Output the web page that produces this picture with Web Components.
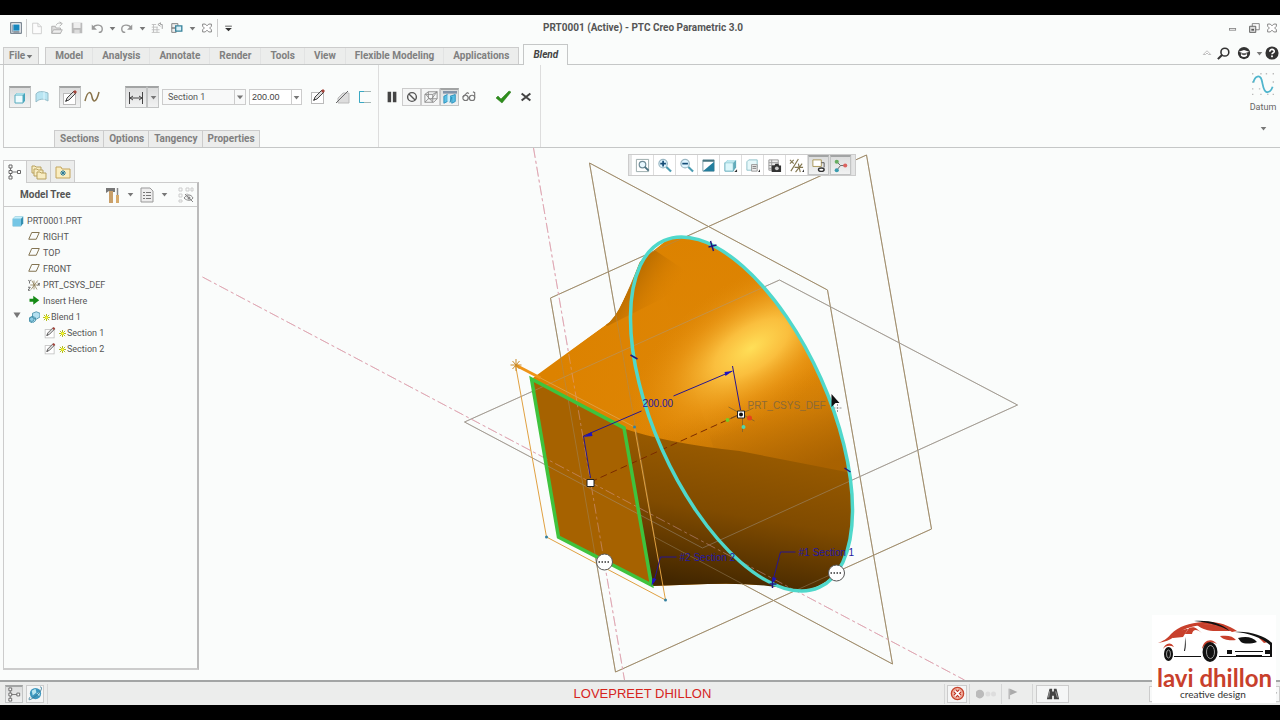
<!DOCTYPE html>
<html lang="en">
<head>
<meta charset="utf-8">
<title>PRT0001 (Active) - PTC Creo Parametric 3.0</title>
<style>
html, body { margin: 0; background: #000; }
body { font-family: Roboto, "Liberation Sans", sans-serif; font-size: 10px; color: #666; }
</style>
</head>
<body>
<creo-app></creo-app>
<script>
const ICONS = {
  app: '<rect x="2" y="2" width="12" height="12" fill="#fff" stroke="#456"/><rect x="3" y="4" width="2" height="9" fill="#9ab"/><rect x="5" y="4" width="7" height="7" fill="#1586bd"/><path d="M5 12.500h7" stroke="#234"/>',
  new: '<path d="M3 2.500h6l4 4v8H3zM9 2.500v4h4" fill="#fcfcfc" stroke="#ccc"/>',
  open: '<path d="M2 14V6h4l1 2h5v6z" fill="#ddd" stroke="#aaa"/><path d="M4 10h10l-2 4H2z" fill="#eee" stroke="#aaa"/><path d="M7 5c1-3 4-3 6-2M11 1l3 2-3 3" fill="none" stroke="#aaa"/>',
  save: '<path d="M2 2h12v12H2z" fill="#bbb"/><path d="M4 2h8v6H4z" fill="#eee"/><path d="M5 10h6v4H5z" fill="#ddd"/>',
  undo: '<path d="M3 8c3-5 11-4 11 1 0 3-2 4-4 4" fill="none" stroke="#999" stroke-width="1.600"/><path d="M2 4v6h6z" fill="#999"/>',
  redo: '<path d="M13 8C10 3 2 4 2 9c0 3 2 4 4 4" fill="none" stroke="#999" stroke-width="1.600"/><path d="M14 4v6H8z" fill="#999"/>',
  regen: '<path d="M2 4h5M2 7h7M2 10h9M2 13h9M4 4v9M8 7v6" stroke="#bbb"/><path d="M9 4l3-2v2h2v5M9 4l3 2" fill="none" stroke="#999"/>',
  windows: '<path d="M2 3h7v5H2zM2 8h5v5H2z" fill="#eee" stroke="#777"/><path d="M6.500 5.500h7v6h-7z" fill="#d9f0f8" stroke="#38839c" stroke-width="1.500"/>',
  closewin: '<path d="M3 3.500h3l2 2 2-2h3V6l-2 2 2 2v2.500h-3l-2-2-2 2H3V10l2-2-2-2z" fill="#fff" stroke="#777"/>',
  down: '<path d="M3 5.500h10L8 11.500z" fill="#777"/>',
  menu: '<path d="M2 3h12v1.500H2zM2 7h12l-6 6z" fill="#333"/>',
  min: '<rect x="4" y="8.500" width="7" height="2" fill="#fff" stroke="#888"/>',
  restore: '<path d="M6 3h8v7H6z" fill="#fff" stroke="#777"/><path d="M3 6h7v7H3z" fill="#ddd" stroke="#555"/><path d="M5 9h3v2H5z" fill="#555"/>',
  collapse: '<path d="M3 10l5-5 5 5h-3L8 8l-2 2z" fill="#fff" stroke="#aaa"/>',
  search: '<circle cx="9" cy="7" r="4.500" fill="none" stroke="#333" stroke-width="1.800"/><path d="M6 10l-5 5" stroke="#333" stroke-width="2.400"/>',
  learn: '<circle cx="8" cy="8" r="7" fill="#333"/><path d="M2 6.500l6-2 6 2-6 2z" fill="#fff"/><path d="M4.500 8v3c2 2 5 2 7 0V8L8 9.500z" fill="#fff"/><path d="M5 9l3 1 3-1" fill="none" stroke="#333"/>',
  help: '<circle cx="8" cy="8" r="7.500" fill="#333"/><path d="M5.500 6.500c0-4 5.500-3 5 0-.3 1.400-2.500 1.500-2.500 3" fill="none" stroke="#fff" stroke-width="1.900"/><rect x="7" y="10.800" width="2" height="2" fill="#fff"/>',
  solid: '<path d="M3 5l2-2h8v8l-2 2H3z" fill="#45a5bd"/><path d="M3 5h8v8H3z" fill="#eefcff" stroke="#57aabd"/><path d="M3 5l2-2h8l-2 2z" fill="#a3dce7"/>',
  surface: '<path d="M2 13V5c2-3 6-3 12-1v8c-5-3-9-2-12 1z" fill="#b8e5f2" stroke="#96bdc9"/><path d="M10 3v8" stroke="#dff7ff"/>',
  sketch: '<rect x="1.500" y="3.500" width="12" height="11" fill="#fff" stroke="#bbb"/><path d="M4 11l1-3 7-7 2 2-7 7z" fill="#ddd" stroke="#444"/><path d="M11 2l2-2 2 2-2 2z" fill="#a5443b"/><path d="M3 12l2-1-1-1z" fill="#111"/>',
  curve: '<path d="M1 12C4 0 7 3 8 8s4 7 7-5" fill="none" stroke="#88734a" stroke-width="1.500"/>',
  dim: '<path d="M1.500 2v12M14.500 2v12M2 8h12M5 6L2 8l3 2M11 6l3 2-3 2" fill="none" stroke="#444"/>',
  blendcut: '<path d="M3 14V9l5-5h6v10z" fill="#ddd" stroke="#bbb"/><path d="M1 14L13 2" stroke="#666"/>',
  openend: '<path d="M14 2.500H2.500v11H14" fill="none" stroke="#a7b7b5"/><path d="M7 2.500H2.500v11H7" fill="none" stroke="#39a9c4"/>',
  pause: '<path d="M3 2h4v12H3zM9 2h4v12H9z" fill="#444"/>',
  none: '<circle cx="8" cy="8" r="5" fill="none" stroke="#555" stroke-width="1.600"/><path d="M4.500 4.500l7 7" stroke="#555" stroke-width="1.600"/>',
  wire: '<path d="M1 5l4-3h10v8l-4 4H1zM1 5h9v9M10 5l5-3M5 2v8h10M1 14l4-4M2 5l8 9M15 2l-7 9" fill="none" stroke="#888"/>',
  attach: '<path d="M0 0h16v3H0z" fill="#8193a8"/><path d="M1 6l4-2v8l-4 2zM8 6l6-2v8l-4 2V7l-2 6z" fill="#5abfe4" stroke="#258db8"/><path d="M5 4l3 2v6l-3 0z" fill="#c8eefb"/>',
  glasses: '<circle cx="4" cy="9" r="3" fill="none" stroke="#777" stroke-width="1.300"/><circle cx="11.500" cy="9" r="3" fill="none" stroke="#777" stroke-width="1.300"/><path d="M1 8l5-5 2 1M7 9h2M14.500 9V3l-2-1" fill="none" stroke="#777" stroke-width="1.300"/>',
  ok: '<path d="M1 9l2-2 3 3 8-8 2 1-9 11z" fill="#2d8f1b" stroke="#28741b" stroke-width=".5"/>',
  cancel: '<path d="M3 4l10 8M13 4L3 12" stroke="#444" stroke-width="2.300"/>',
  datum: '<g fill="#bbb"><path d="M0 0h1v1H0zM6 0h1v1H6zM10 0h1v1h-1zM15 0h1v1h-1zM0 6h1v1H0zM15 6h1v1h-1zM0 11h1v1H0zM5 11h1v1H5zM0 15h1v1H0zM6 15h1v1H6zM11 15h1v1h-1zM15 15h1v1h-1z"/></g><path d="M1 7c1-5 5-6 6-2 1 3 1 9 4 9 2 0 3-1 4-4" fill="none" stroke="#4fb5cd" stroke-width="1.300"/>',
  tree: '<path d="M3.500 3v10M4 8h9" stroke="#777"/><path d="M2 1h3v3H2zM2 6.500h3v3H2zM2 12h3v3H2zM10.500 6.500h3v3h-3z" fill="#fff" stroke="#666"/>',
  folders: '<g fill="#f8edc3" stroke="#b8a15e"><path d="M1 2h3l1 1h5v6H1z"/><path d="M3 5h3l1 1h5v6H3z"/><path d="M6 8h3l1 1h5v6H6z"/></g>',
  favorite: '<path d="M1 3h5l1 2h8v9H1z" fill="#faedbf" stroke="#c4a55c"/><path d="M8 6v6M5 9h6M6 7l4 4M10 7l-4 4" stroke="#287b9b"/>',
  tools: '<path d="M4 4h4v12H4z" fill="#c9a06a"/><path d="M1 1h9v4H8V4H4L1 6z" fill="#777"/><path d="M12.500 1v7" stroke="#888" stroke-width="1.500"/><path d="M11 8h3v8h-3z" fill="#d6aa6b"/>',
  list: '<path d="M2 1h9l3 3v11H2z" fill="#eee" stroke="#999"/><path d="M4 5h2v1H4zM4 8h2v1H4zM4 11h2v1H4zM7 5h5v1H7zM7 8h5v1H7zM7 11h5v1H7z" fill="#777"/>',
  treehide: '<path d="M1 1h3v3H1zM1 7h3v3H1zM1 13h3v2H1zM8 1h3v3H8zM8 7h2v3H8zM13 1h2v3h-2z" fill="none" stroke="#ccc"/><path d="M6 11c3-4 7-4 9 0-2 3-6 3-9 0zM7 7l8 8" fill="none" stroke="#888"/><circle cx="11" cy="11" r="1.500" fill="#888"/>',
  part: '<path d="M1 5l3-3h11v9l-3 4H1z" fill="#348fb0"/><path d="M1 5h11v10H1z" fill="#75c6e5"/><path d="M1 5l3-3h11l-3 3z" fill="#c5effb"/>',
  plane: '<path d="M1 11L5 2h10l-4 9z" fill="none" stroke="#80704d" stroke-width="1.300"/>',
  csys: '<path d="M3 8h11M8 2v12M4 14l9-12M5 2l7 12" stroke="#8a7a50"/><path d="M0 1l2 2 2-2M2 3v3M0 11h3l-3 4h3M13 5l3 4M16 5l-3 4" fill="none" stroke="#444"/>',
  insert: '<path d="M2 5h5V1l8 6-8 6V9H2z" fill="#168b16"/>',
  blend: '<path d="M6 3l5-2 5 2v5l-5 3-5-2zM2 9l4-2 4 2v4l-4 3-4-2z" fill="#b4e0f0" stroke="#35849f"/><circle cx="5" cy="11" r="3" fill="#8bcae2" stroke="#35849f"/>',
  star: '<path d="M8 0v16M0 8h16M2 2l12 12M14 2L2 14" stroke="#a9b300" stroke-width="2"/><circle cx="8" cy="8" r="3" fill="#ff3"/>',
  refit: '<path d="M1.500 1.500h13v13h-13z" fill="#fff" stroke="#9aa"/><circle cx="8" cy="7" r="3.500" fill="#e8f8ff" stroke="#6f8c98" stroke-width="1.300"/><path d="M10.500 9.500l4 4" stroke="#497181" stroke-width="2"/>',
  zoomin: '<circle cx="6.500" cy="6" r="4.500" fill="#dff5ff" stroke="#9bb8c4" stroke-width="1.300"/><path d="M10 9.500l5 5" stroke="#4a9bb1" stroke-width="2.200"/><path d="M6.500 3v6M3.500 6h6" stroke="#164d77" stroke-width="1.800"/>',
  zoomout: '<circle cx="6.500" cy="6" r="4.500" fill="#dff5ff" stroke="#9bb8c4" stroke-width="1.300"/><path d="M10 9.500l5 5" stroke="#4a9bb1" stroke-width="2.200"/><path d="M3.500 6h6" stroke="#164d77" stroke-width="1.800"/>',
  repaint: '<path d="M2 2h12v12H2z" fill="#fff" stroke="#7f9fa8"/><path d="M2 14L14 4v10z" fill="#247e9d"/><path d="M2 2h12v2H2z" fill="#477580"/>',
  shade: '<path d="M2 5l3-3h9v8l-3 4H2z" fill="#62acbb"/><path d="M2 5h9v9H2z" fill="#dcf7fb" stroke="#68aebd"/><path d="M2 5l3-3h9l-3 3z" fill="#bfe8ef"/><path d="M15 15h-3l3-3z" fill="#333"/>',
  views: '<path d="M2 4l2-2h9v8l-2 3H2z" fill="#e6f8fa" stroke="#8ec1ca"/><path d="M7 7h6v7H7z" fill="#eee" stroke="#999"/><path d="M8 9h4M8 11h4" stroke="#777"/><path d="M16 15h-2l2-3z" fill="#333"/>',
  camera: '<path d="M2 2h10v11H2zM2 5h10M2 8h10M2 11h10M5 2v11" fill="#eee" stroke="#999"/><path d="M5 8h3l1-2h3l1 2h2v7H5z" fill="#333"/><circle cx="10.500" cy="11" r="2" fill="#ccc"/>',
  datums: '<path d="M1 2l4 4M5 2L1 6M10 1L2 14M6 10h9M10 6l2 9M14 6l-7 9" stroke="#82764e" stroke-width="1.200"/><path d="M16 15h-2l2-3z" fill="#333"/>',
  annot: '<path d="M2 2h9v7H2z" fill="#fff" stroke="#a89555"/><path d="M11 5h3v5" fill="none" stroke="#555"/><ellipse cx="11" cy="12.500" rx="3" ry="1.800" fill="#fff" stroke="#333" stroke-width="1.500"/>',
  spin: '<path d="M4 4l4 4h5M8 8l-4 5" fill="none" stroke="#666"/><circle cx="4" cy="4" r="2.200" fill="#67ad61"/><circle cx="13" cy="8" r="2.200" fill="#db625f"/><circle cx="4" cy="13" r="2.200" fill="#399cae"/>',
  browser: '<circle cx="8" cy="8" r="6" fill="#3c96bd"/><path d="M4 5l4-2 1 4-4 3zM9 8l4-2-1 5z" fill="#b7e5f0"/><path d="M2 12c-3 5 2 2 7-2s7-9 4-9" fill="none" stroke="#397a94"/>',
  stop: '<circle cx="8" cy="8" r="6.500" fill="#f4b9a8" stroke="#c7452f" stroke-width="1.500"/><path d="M5 5l6 6M11 5l-6 6" stroke="#b92c1e" stroke-width="4"/><path d="M5 5l6 6M11 5l-6 6" stroke="#fff" stroke-width="1.800"/>',
  flag: '<path d="M3 2h2v13H3z" fill="#bbb"/><path d="M5 2l9 4-9 4z" fill="#aaa"/>',
  find: '<path d="M4 2h3v3h2V2h3l3 12H9v-4H7v4H1z" fill="#444"/><path d="M4 5l-1 7M11 5l2 7" stroke="#aaa"/>',
  dots: '<circle cx="3" cy="8" r="3.500" fill="#bbb"/><circle cx="9.500" cy="8" r="2" fill="#ddd"/><circle cx="14" cy="8" r="2" fill="#ddd"/>',
  twisty: '<path d="M1 3h14L8 14z" fill="#777"/>'
};
const define = (name, css, html) => customElements.define(name, class extends HTMLElement {
  connectedCallback() {
    if (this.shadowRoot) return;
    const root = this.attachShadow({ mode: 'open' });
    root.innerHTML = `<style>:host,*{box-sizing:border-box}${css}</style>${typeof html === 'function' ? html(this) : html}`;
  }
});

define('c-icon', ':host{display:inline-block;width:var(--icon,16px);height:var(--icon,16px);flex:none}svg{display:block;width:100%;height:100%}',
  el => `<svg viewBox="0 0 16 16" aria-hidden="true">${ICONS[el.getAttribute('name')]}</svg>`);

define('tool-button', `:host{display:block;width:20px;height:22px;flex:none}
 button{display:flex;align-items:center;justify-content:center;width:100%;height:100%;padding:0;border:0;background:none}
 :host([pressed]) button{background:linear-gradient(#dcdddd,#f1f2f2);border:1px solid #c2c4c4;border-top:2px solid #a2a4a4}
 :host([raised]) button{background:#f5f6f6;border:1px solid #ccc}
 :host([narrow]){width:10px}`,
  el => `<button type="button" aria-label="${el.getAttribute('label')}"><c-icon name="${el.getAttribute('icon')}"></c-icon></button>`);

const btn = (icon, label, attrs = '') => `<tool-button icon="${icon}" label="${label}" ${attrs}></tool-button>`;
const arrow = label => btn('down', label, 'narrow style="--icon:9px"');

define('title-bar', `:host{display:grid;grid-template-columns:1fr auto 1fr;align-items:center;height:27px;padding:0 0 1px 6px}
 .q,.w{display:flex;align-items:center;--icon:14px}.w{justify-content:flex-end}.w tool-button{width:21px}.w tool-button:last-child{width:16px}
 i{width:1px;height:18px;background:#ccc}h1{margin:0;font-size:10px;line-height:14px;font-weight:700;color:#555}`,
 `<div class="q">${btn('app','Window menu')}<i></i>${btn('new','New')}${btn('open','Open')}${btn('save','Save')}${btn('undo','Undo')}${arrow('Undo list')}${btn('redo','Redo')}${arrow('Redo list')}${btn('regen','Regenerate')}${btn('windows','Windows')}${arrow('Window list')}${btn('closewin','Close')}<i></i>${btn('menu','Customize toolbar','style="--icon:9px"')}</div>
 <h1>PRT0001 (Active) - PTC Creo Parametric 3.0</h1>
 <div class="w">${btn('min','Minimize')}${btn('restore','Restore')}${btn('closewin','Close window')}</div>`);

define('ribbon-tabs', `:host{display:flex;align-items:flex-end;height:23px;padding-left:3px;border-bottom:1px solid #c5c7c7}
 button{font:700 10px/16px Roboto,"Liberation Sans",sans-serif;color:#808080;border:0;background:none;margin:0;padding:0 9px;white-space:nowrap}
 .file{display:flex;align-items:center;background:#ecedec;border:1px solid #ccc;border-bottom:0;padding:0 4px 0 5px;margin-right:6px}
 .file c-icon{--icon:9px}
 nav{display:flex;background:#ecedec;border:1px solid #ccc;border-bottom:0}nav button+button{border-left:1px solid #e2e3e3}
 .on{font-style:italic;color:#444;background:#fafcfb;border:1px solid #c5c7c7;border-bottom:0;height:21px;margin:0 0 -1px 4px;padding:2px 9px 2px;z-index:1}
 .r{margin-left:auto;display:flex;align-self:center;--icon:14px}.r tool-button{height:18px}.r tool-button:first-child{width:14px}.r tool-button:last-child{width:16px}`,
 `<button class="file">File<c-icon name="down"></c-icon></button><nav>${['Model','Analysis','Annotate','Render','Tools','View','Flexible Modeling','Applications'].map(t => `<button>${t}</button>`).join('')}</nav><button class="on">Blend</button>
 <div class="r">${btn('collapse','Minimize ribbon','style="--icon:12px"')}${btn('search','Search')}${btn('learn','Learning')}${arrow('Learning list')}${btn('help','Help')}</div>`);

define('drop-list', `:host{display:grid;height:16px;width:84px;border:1px solid #ccc;background:#f8f9f9}
 select{grid-area:1/1;appearance:none;border:0;background:none;width:100%;min-width:0;padding:0 16px 0 5px;font:9px/14px Roboto,sans-serif;color:#555}
 span{grid-area:1/1;justify-self:end;display:flex;align-items:center;border-left:1px solid #ccc;pointer-events:none;--icon:10px}`,
 el => `<select aria-label="${el.getAttribute('label')}"><option>${el.getAttribute('value') || ''}</option></select><span><c-icon name="down"></c-icon></span>`);

define('value-box', `:host{display:flex;height:16px;width:53px;border:1px solid #ccc;background:#fff}
 input{flex:1;min-width:0;border:0;padding:0 2px;font:9px/14px "Liberation Sans",sans-serif;color:#444;background:none}
 tool-button{height:14px;border-left:1px solid #ccc}`,
 `<input aria-label="Depth" value="200.00">${arrow('Recent depths')}`);

define('blend-dashboard', `:host{display:flex;height:83px;margin-left:3px;border-left:1px solid #ccc;border-bottom:1px solid #c5c7c7;flex:none}
 .a{display:flex;flex-direction:column;justify-content:space-between;width:375px;border-right:1px solid #ddd;padding-top:21px}
 .c{display:flex;align-items:center;padding-left:5px}.c tool-button{width:22px}.c tool-button[narrow]{width:12px}
 .g1{margin-left:6px}.g2{margin-left:22px}.g3{margin-left:3px}.g4{margin-left:3px}.g5{margin-left:5px}
 nav{display:flex;margin-left:50px}nav button{font:700 10px/16px Roboto,sans-serif;color:#808080;background:#ecedec;border:1px solid #ccc;border-bottom:0;border-right-width:0;padding:0 4px 0 5px;height:17px}nav button:last-child{border-right-width:1px}
 .b{display:flex;align-items:flex-start;width:162px;border-right:1px solid #ddd;padding:23px 0 0 3px;--icon:14px}.b tool-button{width:19px;height:18px}.b tool-button:first-child{width:20px}.b .ok{margin-left:15px;--icon:16px}.b .x{margin-left:4px}
 .datum{margin-left:auto;border:0;background:none;width:34px;padding:8px 0 0;display:flex;flex-direction:column;align-items:center;font:9px/14px Roboto,sans-serif;color:#666}
 .datum .i{--icon:22px;margin-bottom:5px}.datum .d{--icon:9px;margin-top:10px}`,
 `<div class="a"><div class="c">${btn('solid','Blend as solid','pressed')}${btn('surface','Blend as surface')}${btn('sketch','Sketched sections','pressed class="g1"')}${btn('curve','Selected sections')}${btn('dim','Offset dimension','pressed class="g2"')}<tool-button icon="down" label="Offset options" narrow pressed style="--icon:9px"></tool-button><drop-list class="g3" label="Section" value="Section 1"></drop-list><value-box class="g4"></value-box>${btn('sketch','Edit sketch','class="g5"')}${btn('blendcut','Remove material','class="g4"')}${btn('openend','Capped ends')}</div>
 <nav><button>Sections</button><button>Options</button><button>Tangency</button><button>Properties</button></nav></div>
 <div class="b">${btn('pause','Pause')}${btn('none','No preview','raised')}${btn('wire','Unattached','raised')}${btn('attach','Attached','pressed')}${btn('glasses','Verify')}${btn('ok','OK','class="ok"')}${btn('cancel','Cancel','class="x"')}</div>
 <button class="datum"><c-icon class="i" name="datum"></c-icon>Datum<c-icon class="d" name="down"></c-icon></button>`);

define('tree-row', `:host{display:flex;align-items:center;height:16px;font-size:9px;line-height:16px;color:#555;--icon:12px;padding-left:var(--indent)}
 .star{--icon:7px;margin-left:3px}.label{margin-left:3px}.star+.label{margin-left:1px}.tw{--icon:8px;margin:0 7px 4px -15px}`,
 el => `${el.hasAttribute('open') ? '<c-icon class="tw" name="twisty"></c-icon>' : ''}<c-icon name="${el.getAttribute('icon')}"></c-icon>${el.hasAttribute('fresh') ? '<c-icon class="star" name="star"></c-icon>' : ''}<span class="label"><slot></slot></span>`);

define('model-tree', `:host{display:flex;flex-direction:column;padding:12px 0 10px 3px}
 .tabs{display:flex;height:22px}.tabs tool-button{width:24px;height:22px;background:#ecedec;border:1px solid #ccc;border-bottom:0;border-left:0}.tabs tool-button:first-child{background:#fafcfb;border-left:1px solid #ccc;height:23px;margin-bottom:-1px;z-index:1}
 .panel{flex:1;border:1px solid #ccc;border-right:2px solid #bbb;border-bottom:2px solid #ccc}
 header{display:flex;align-items:center;height:24px;padding-left:16px;border-bottom:1px solid #ccc}
 h2{font-size:10px;line-height:14px;font-weight:700;color:#555;margin:0 auto 0 0}header tool-button[narrow]{margin:0 2px}header tool-button:last-child{margin:0 1px 0 5px}
 .rows{padding-top:6px}.l0{--indent:8px}.l1{--indent:24px}.l2{--indent:40px}`,
 `<div class="tabs">${btn('tree','Model tree')}${btn('folders','Folder browser')}${btn('favorite','Favorites')}</div>
 <div class="panel"><header><h2>Model Tree</h2>${btn('tools','Settings')}${arrow('Settings list')}${btn('list','Show')}${arrow('Show list')}${btn('treehide','Filter')}</header>
 <div class="rows"><tree-row class="l0" icon="part">PRT0001.PRT</tree-row><tree-row class="l1" icon="plane">RIGHT</tree-row><tree-row class="l1" icon="plane">TOP</tree-row><tree-row class="l1" icon="plane">FRONT</tree-row><tree-row class="l1" icon="csys">PRT_CSYS_DEF</tree-row><tree-row class="l1" icon="insert">Insert Here</tree-row><tree-row class="l1" icon="blend" fresh open>Blend 1</tree-row><tree-row class="l2" icon="sketch" fresh>Section 1</tree-row><tree-row class="l2" icon="sketch" fresh>Section 2</tree-row></div></div>`);

define('view-toolbar', `:host{display:flex;height:22px;padding:0 3px;background:#e4e5e5;border:1px solid #ccc;--icon:15px}
 tool-button{width:22px;height:20px;background:#fff;border-right:1px solid #ddd}`,
 btn('refit','Refit') + btn('zoomin','Zoom in') + btn('zoomout','Zoom out') + btn('repaint','Repaint') + btn('shade','Display style') + btn('views','Saved views') + btn('camera','View manager') + btn('datums','Datum display') + btn('annot','Annotation display','pressed') + btn('spin','Spin center','pressed'));

define('model-view', `:host{display:block;position:relative;min-width:0;min-height:0}svg{display:block;position:absolute;inset:0;width:100%;height:100%}
 view-toolbar{position:absolute;top:6px;left:39.700%}text{font:10px "Liberation Sans",sans-serif;fill:#2418a0}`,
 `<svg viewBox="200 148 1080 532" preserveAspectRatio="xMidYMid meet" role="img" aria-label="Blend preview">
 <defs>
 <linearGradient id="top" gradientUnits="userSpaceOnUse" x1="560" y1="350" x2="850" y2="430"><stop offset="0" stop-color="#dc8200"/><stop offset=".4" stop-color="#de8504"/><stop offset=".65" stop-color="#e28a09"/><stop offset="1" stop-color="#b96c00"/></linearGradient>
 <radialGradient id="glow" gradientUnits="userSpaceOnUse" cx="0" cy="0" r="1" gradientTransform="translate(752 348) rotate(-34) scale(140 68)"><stop offset="0" stop-color="#ffdf58"/><stop offset=".3" stop-color="#fdc544" stop-opacity=".9"/><stop offset=".65" stop-color="#efa01f" stop-opacity=".5"/><stop offset="1" stop-color="#e08a0a" stop-opacity="0"/></radialGradient>
 <linearGradient id="shadow" gradientUnits="userSpaceOnUse" x1="775" y1="380" x2="810" y2="470"><stop offset="0" stop-color="#a96200" stop-opacity="0"/><stop offset="1" stop-color="#a05c00" stop-opacity=".8"/></linearGradient>
 <linearGradient id="low" gradientUnits="userSpaceOnUse" x1="745" y1="440" x2="720" y2="588"><stop offset="0" stop-color="#9b5c00"/><stop offset=".5" stop-color="#804b00"/><stop offset="1" stop-color="#432700"/></linearGradient>
 <linearGradient id="neck" gradientUnits="userSpaceOnUse" x1="622" y1="285" x2="662" y2="310"><stop offset="0" stop-color="#b06800"/><stop offset=".4" stop-color="#c47300" stop-opacity=".7"/><stop offset="1" stop-color="#d87f00" stop-opacity="0"/></linearGradient>
 <clipPath id="body"><path d="M532 379L606 325Q615 320 624 300L640 262L671 237A190 87 65.900 0 1 852 520Q850 585 800 591Q760 582 708 584L652 586L559 538Z"/></clipPath>
 <g id="planes" fill="none"><path d="M590 163L828 290L893 664L655 537ZM551 298L867 155L932 529L616 672Z" stroke="#a08d6c"/><path d="M465 422L780 280L1018 405L703 548Z" stroke="#a49d94"/><path d="M203 277L965 680M534 148L625 680" stroke="#e0a8b4" stroke-dasharray="10 3 3 3"/></g>
 </defs>
 <use href="#planes"/>
 <g clip-path="url(#body)"><ellipse cx="742" cy="414" rx="190" ry="87" transform="rotate(65.900 742 414)" fill="url(#top)"/><path d="M530 379L606 325Q615 320 624 300L650 250L760 590L652 586Z" fill="url(#top)"/><path d="M606 325Q620 315 640 262L655 250L700 280L608 326Z" fill="url(#neck)"/><rect x="640" y="220" width="220" height="260" fill="url(#shadow)"/><rect x="600" y="220" width="260" height="270" fill="url(#glow)"/><path d="M620 427Q665 443 740 451L858 474V600H640Z" fill="url(#low)"/></g>
 <path d="M532 379L624 428L652 586L559 538Z" fill="#a66200"/>
 <use href="#planes" opacity=".45"/>
 <path d="M516 365L635 427L666 600L547 537Z" fill="none" stroke="#e0a040"/><path d="M516 365L541 378" stroke="#ee9417" stroke-width="3"/><path d="M511 365h11M516.500 359v12M513 361l7 8M520 361l-7 8" stroke="#c98b2b"/>
 <path d="M591 482L741 414" stroke="#7a2b00" stroke-dasharray="7 4"/>
 <path d="M532 379L624.500 428L652 585L559 537Z" fill="none" stroke="#3fc33d" stroke-width="3.500"/>
 <path d="M591 478L584 436L642 411M674 396L733 371M741 410L733 366M654 583L661 557H677M773 582L781 552H796" fill="none" stroke="#261590"/>
 <path d="M584 437l8-5 1 4zM733 371l-8 1 1 4zM652 586l1-8 4 1zM772 586l1-9 4 1z" fill="#1d12c0"/>
 <ellipse cx="742" cy="414" rx="190" ry="87" transform="rotate(65.900 742 414)" fill="none" stroke="#4fd8cb" stroke-width="3.500"/>
 <text x="643" y="407">200.00</text><text x="680" y="561">#2 Section 2</text><text x="748" y="409" style="fill:#8c6a38">PRT_CSYS_DEF</text><text x="799" y="556">#1 Section 1</text>
 <path d="M631 355l7 4M711 241l3 10M709 247l8-2M845 468l6 4M770 584h7M773 580v8" stroke="#211780" stroke-width="1.500"/>
 <path d="M729 407l26 14M728 420l26-12M743 418v14" stroke="#785c31" opacity=".7"/><circle cx="728" cy="420" r="2" fill="#77c927"/><circle cx="750" cy="418" r="2.500" fill="#e5441b"/><circle cx="744" cy="427" r="2" fill="#50d7af"/>
 <path d="M587.500 479.500h7v7h-7zM738 411h7v7h-7z" fill="#fff" stroke="#222"/><circle cx="741.500" cy="414.500" r="2" fill="#111"/>
 <g fill="#3481a0"><circle cx="547" cy="537" r="1.500"/><circle cx="666" cy="600" r="1.500"/><circle cx="635" cy="427" r="1.500"/></g>
 <g fill="#fff" stroke="#555"><circle cx="605" cy="562" r="8"/><circle cx="837" cy="573" r="8"/></g><path d="M599 562h12M831 573h12" stroke="#333" stroke-width="1.500" stroke-dasharray="1.500 1.500"/>
 <path d="M832 394l8 9-4 0-4 4z" fill="#111"/><path d="M838 404v9M834 408h9" stroke="#999" stroke-dasharray="2 1"/>
 </svg><view-toolbar></view-toolbar>`);

define('status-bar', `:host{display:grid;grid-template-columns:1fr auto 1fr;align-items:center;height:25px;flex:none;padding-left:5px;background:#ecedec;border-top:2px solid #a3a5a5}
 div{display:flex;align-items:center;--icon:15px}.l{gap:3px}.l tool-button{width:18px;height:18px}
 output{font:13px/16px "Liberation Sans",sans-serif;color:#d6241d}i{width:1px;height:20px;background:#d5d6d6}
 .r{justify-content:flex-end}.r tool-button{height:18px}.find{width:33px;margin:0 80px 0 3px;--icon:14px}.dots{width:25px;margin:0 3px;--icon:20px}.stop{margin:0 2px}.flag{margin-right:10px;--icon:13px}drop-list{width:131px}`,
 `<div class="l">${btn('tree','Toggle tree','pressed')}${btn('browser','Toggle browser','raised')}<i></i></div><output>LOVEPREET DHILLON</output>
 <div class="r"><i></i>${btn('stop','Stop','raised class="stop"')}<i></i>${btn('dots','Regeneration status','class="dots"')}<i></i>${btn('flag','Notifications','class="flag"')}<i></i>${btn('find','Find','raised class="find"')}<drop-list label="Selection filter"></drop-list></div>`);

define('brand-logo', `:host{display:block;width:124px;height:88px;background:#fff}svg{display:block;width:100%;height:100%}
 .n{font:700 24px Lato,sans-serif;fill:#c8402c}.s{font:10px Lato,sans-serif;fill:#333}`,
 `<svg viewBox="1152 615 124 88"><g fill="#c8402c"><path d="M1158 643c5-2 9-4 13-9 8-8 18-11 32-12 14-1 25 3 34 9l-5 1c-9-6-18-8-29-7-13 1-21 4-29 12-4 3-9 5-16 6z"/><path d="M1172 637c6-6 12-8 16-8l-5 8-10 1zM1185 634l4-6c3-1 6-1 8 1l5 4c-5-4-9-4-10 1zM1197 625c12-2 25 0 34 6h-15c-8 0-14-2-19-6zM1220 636c8-1 13 0 16 4-6 1-13 0-16-4zM1202 649c1-9 10-12 15-5-6-3-11-1-15 5zM1163 649c2-6 8-8 11-2-4-2-8-2-11 2zM1259 638c4 0 7 2 9 4l-4 1z"/></g>
 <g fill="#111"><ellipse cx="1168.500" cy="654" rx="4.500" ry="7"/><ellipse cx="1210" cy="652" rx="7.500" ry="10"/><path d="M1194 621c15-1 27 2 36 10-10-5-17-8-36-10zM1235 632c14-1 28 3 37 11v14h-53v-1h51v-11c-9-8-22-12-35-13zM1238 638c8-2 15-1 19 4-6 2-13 2-16 0zM1227 650h5v4h-5zM1265 650h5v4h-5zM1174 656h27v1h-27zM1235 651h28v1h-28zM1236 655h26v1h-26z"/><path d="M1185 637c1 5 1 10 0 14l-1 0c1-5 1-9 1-14z"/></g><g fill="none" stroke="#999"><ellipse cx="1168.500" cy="654" rx="2" ry="4"/><ellipse cx="1210.500" cy="652" rx="4" ry="6.500"/></g>
 <text class="n" x="1157" y="687">lavi dhillon</text><text class="s" x="1180" y="698">creative design</text></svg>`);

define('creo-app', `:host{display:flex;min-height:100vh;padding:15px 0;background:#000}
 .app{position:relative;display:flex;flex-direction:column;flex:1;min-width:0;background:#fafcfb}
 main{display:grid;grid-template-columns:199px 1fr;flex:1;min-height:0}brand-logo{position:absolute;right:4px;bottom:2px}`,
 `<div class="app"><title-bar></title-bar><ribbon-tabs></ribbon-tabs><blend-dashboard></blend-dashboard><main><model-tree></model-tree><model-view></model-view></main><status-bar></status-bar><brand-logo></brand-logo></div>`);
</script>
</body>
</html>
